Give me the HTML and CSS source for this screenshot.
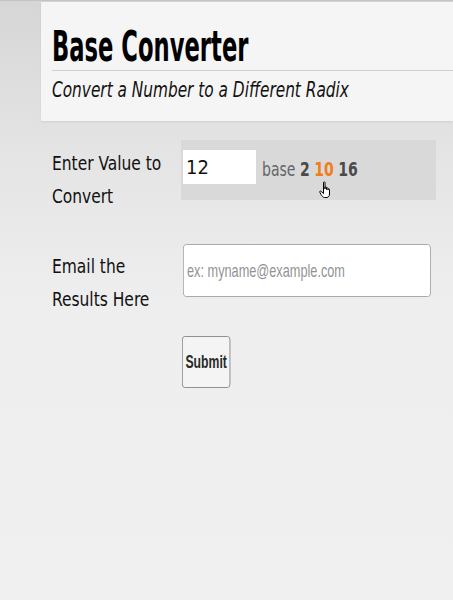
FILE: index.html
```html
<!DOCTYPE html>
<html lang="en">
<head>
<meta charset="utf-8">
<title>Base Converter</title>
<link rel="stylesheet" href="styles.css">
</head>
<body>
<div class="page">
  <header class="head">
    <h1 class="title"><span class="sq-title">Base Converter</span></h1>
    <p class="sub"><span class="sq-sub">Convert a Number to a Different Radix</span></p>
  </header>
  <form class="form">
    <div class="row">
      <div class="label"><div class="label-text">Enter Value to Convert</div></div>
      <div class="valuebox">
        <input class="value" type="text" value="12">
        <span class="bases"><span class="base-word">base</span> <b>2</b> <b class="active">10</b> <b>16</b></span>
        <svg class="cursor" width="13" height="18" viewBox="0 0 13 18">
          <path d="M4.5 1.5c0-.9 1.5-.9 1.5 0V8V6.5c0-.9 1.5-.9 1.5 0V8.5V7.5c0-.9 1.5-.9 1.5 0V9V8.5c0-.9 1.5-.9 1.5 0V13c0 2-1 3-2.5 3.5H5.5C4 16.5 3 15 2 13.5L.8 11.2c-.5-.9.6-1.6 1.3-.8L4.5 12.5Z" fill="#fff" stroke="#000" stroke-width="1" stroke-linejoin="round"/>
        </svg>
      </div>
    </div>
    <div class="row row-email">
      <div class="label"><div class="label-text">Email the Results Here</div></div>
      <div class="emailwrap">
        <input class="email" type="email" placeholder="ex: myname@example.com">
      </div>
    </div>
    <div class="row row-submit">
      <div class="label"></div>
      <div class="submitwrap"><button class="submit" type="button">Submit</button></div>
    </div>
  </form>
</div>
</body>
</html>
```
FILE: styles.css
```css
html, body {
  margin: 0;
  padding: 0;
}
body {
  min-height: 600px;
  overflow-x: hidden;
  background: linear-gradient(to bottom, #d6d6d6 0px, #e4e4e4 150px, #eeeeee 300px, #f0f0f0 100%);
  font-family: "DejaVu Sans Condensed", "DejaVu Sans", sans-serif;
  font-stretch: condensed;
  color: #111;
}
.page {
  padding-top: 1px;
  border-top: 1px solid #c4c4c4;
}
.head {
  margin-left: 41px;
  background: #f5f5f5;
  padding: 22px 0 17px 11px;
  box-shadow: 0 1px 2px rgba(0,0,0,0.08);
}
.title {
  margin: 0;
  font-size: 42px;
  line-height: 46px;
  height: 46px;
  font-weight: bold;
  color: #000;
  border-bottom: 1px solid #cfcfcf;
  white-space: nowrap;
}
.sq-title {
  display: inline-block;
  transform: scaleX(0.6);
  transform-origin: 0 0;
}
.sub {
  margin: 4px 0 0 0;
  font-size: 22px;
  line-height: 29px;
  height: 29px;
  font-style: italic;
  white-space: nowrap;
}
.sq-sub {
  display: inline-block;
  transform: scaleX(0.775);
  transform-origin: 0 0;
}
.form {
  margin: 19px 0 0 52px;
}
.row {
  display: grid;
  grid-template-columns: 129px 255px;
}
.label {
  padding-top: 7px;
}
.label-text {
  width: 145px;
  font-size: 20px;
  line-height: 33px;
  transform: scaleX(0.86);
  transform-origin: 0 0;
}
.valuebox {
  position: relative;
  display: flex;
  align-items: center;
  height: 60px;
  padding: 0 0 6px 2px;
  box-sizing: border-box;
  background: #d9d9d9;
}
.value {
  flex: none;
  width: 73px;
  height: 34px;
  box-sizing: border-box;
  border: 0;
  margin: 0;
  padding: 0 0 0 3px;
  background: #fff;
  font-family: inherit;
  font-stretch: condensed;
  font-size: 20px;
  color: #111;
  outline: none;
}
.bases {
  display: inline-block;
  margin-left: 6px;
  font-size: 20px;
  color: #555;
  white-space: nowrap;
  transform: scaleX(0.78);
  transform-origin: 0 50%;
  padding-top: 4px;
}
.base-word {
  color: #666;
}
.bases b {
  color: #4a4a4a;
}
.bases b.active {
  color: #f07d19;
}
.cursor {
  position: absolute;
  left: 138px;
  top: 41px;
}
.row-email {
  margin-top: 31px;
}
.row-email .label {
  padding-top: 6px;
}
.emailwrap {
  height: 53px;
  overflow: hidden;
}
.email {
  width: 370px;
  height: 53px;
  box-sizing: border-box;
  margin: 0 0 0 2px;
  padding: 0 0 0 5px;
  border: 1px solid #9a9a9a;
  border-radius: 5px;
  background: #fff;
  font-family: "Liberation Sans", Arial, sans-serif;
  font-size: 19px;
  transform: scaleX(0.67);
  transform-origin: 0 0;
  outline: none;
}
.email::placeholder {
  color: #939393;
}
.row-submit {
  margin-top: 20px;
}
.submitwrap {
  height: 53px;
  overflow: hidden;
}
.submit {
  width: 71px;
  height: 52px;
  margin: 0 0 0 1px;
  padding: 0;
  border: 1px solid #7e7e7e;
  border-radius: 4px;
  background: #f4f4f4;
  font-family: "Liberation Sans", Arial, sans-serif;
  font-weight: bold;
  font-size: 18px;
  color: #2a2a2a;
  transform: scaleX(0.68);
  transform-origin: 0 0;
}
```
